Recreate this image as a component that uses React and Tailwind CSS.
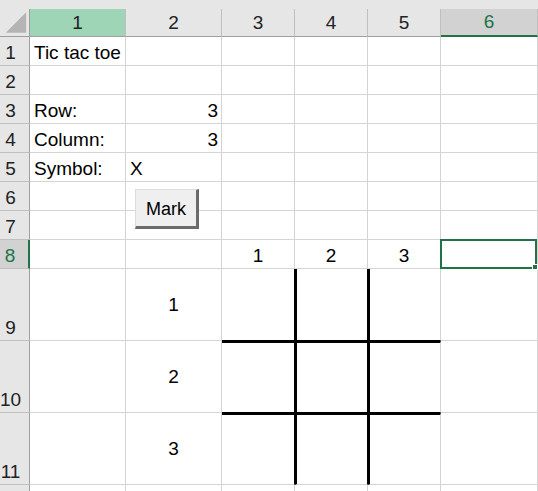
import clsx from "clsx";

const FONT = { fontFamily: '"Liberation Sans", Arial, sans-serif' };

function ColHead({ w, className, children }) {
    return (
        <div
            className={clsx(
                "shrink-0 h-full flex items-center justify-center pt-[1px] border-r border-b border-r-[#bfbfbf] border-b-[#9e9e9e] text-[19px] text-[#222]",
                w,
                className
            )}
        >
            {children}
        </div>
    );
}

function Row({ num, tall, active, children }) {
    return (
        <div className={clsx("flex shrink-0", tall ? "h-[72px]" : "h-[29px]")}>
            <div
                className={clsx(
                    "w-[30px] shrink-0 flex items-end justify-center pr-[8px] pb-[1px] border-b border-b-[#bfbfbf] text-[19px] leading-[22px]",
                    active
                        ? "bg-[#d2d2d2] text-[#217346] border-r-2 border-r-[#217346]"
                        : "bg-[#e6e6e6] text-[#222] border-r border-r-[#9e9e9e]"
                )}
            >
                {num}
            </div>
            {children}
        </div>
    );
}

function Cell({ w, className, children }) {
    return (
        <div
            className={clsx(
                "shrink-0 flex border-r border-b border-[#d4d4d4] text-[19px] leading-[22px] text-black whitespace-nowrap",
                w,
                className
            )}
        >
            {children}
        </div>
    );
}

const W1 = "w-[96px]";
const W2 = "w-[96px]";
const W3 = "w-[73px]";
const W4 = "w-[73px]";
const W5 = "w-[73px]";
const W6 = "flex-1";

const base = "items-end pl-[4px] pb-[1px]";

function EmptyRow({ num }) {
    return (
        <Row num={num}>
            <Cell w={W1} />
            <Cell w={W2} />
            <Cell w={W3} />
            <Cell w={W4} />
            <Cell w={W5} />
            <Cell w={W6} />
        </Row>
    );
}

export default function App() {
    return (
        <div className="w-[538px] h-[491px] overflow-hidden bg-white flex flex-col" style={FONT}>

            <div className="h-[9px] shrink-0 bg-[#e6e6e6]" />

            {/* column headers */}
            <div className="h-[28px] shrink-0 flex bg-[#e6e6e6]">
                <div className="w-[30px] shrink-0 h-full border-r border-b border-r-[#9e9e9e] border-b-[#9e9e9e] flex items-end justify-end">
                    <svg width="30" height="28" viewBox="0 0 30 28">
                        <polygon points="27,4 27,25 6,25" fill="#b4b4b4" />
                    </svg>
                </div>
                <ColHead w={W1} className="bg-[#9fd5b7]">1</ColHead>
                <ColHead w={W2}>2</ColHead>
                <ColHead w={W3}>3</ColHead>
                <ColHead w={W4}>4</ColHead>
                <ColHead w={W5}>5</ColHead>
                <ColHead w={W6} className="bg-[#d2d2d2] text-[#217346] border-b-2 border-b-[#217346]">6</ColHead>
            </div>

            <Row num="1">
                <Cell w={W1} className={base}>Tic tac toe</Cell>
                <Cell w={W2} />
                <Cell w={W3} />
                <Cell w={W4} />
                <Cell w={W5} />
                <Cell w={W6} />
            </Row>

            <EmptyRow num="2" />

            <Row num="3">
                <Cell w={W1} className={base}>Row:</Cell>
                <Cell w={W2} className="items-end justify-end pr-[3px] pb-[1px]">3</Cell>
                <Cell w={W3} />
                <Cell w={W4} />
                <Cell w={W5} />
                <Cell w={W6} />
            </Row>

            <Row num="4">
                <Cell w={W1} className={base}>Column:</Cell>
                <Cell w={W2} className="items-end justify-end pr-[3px] pb-[1px]">3</Cell>
                <Cell w={W3} />
                <Cell w={W4} />
                <Cell w={W5} />
                <Cell w={W6} />
            </Row>

            <Row num="5">
                <Cell w={W1} className={base}>Symbol:</Cell>
                <Cell w={W2} className={base}>X</Cell>
                <Cell w={W3} />
                <Cell w={W4} />
                <Cell w={W5} />
                <Cell w={W6} />
            </Row>

            <Row num="6">
                <Cell w={W1} />
                <Cell w={W2} className="relative">
                    <button
                        type="button"
                        className="absolute z-10 left-[9px] top-[7px] w-[64px] h-[40px] bg-[#efefef] border-t border-l border-[#dcdcdc] border-r-[3px] border-b-[3px] border-r-[#6b6b6b] border-b-[#6b6b6b] text-[18px] text-black flex items-center justify-center pt-[1px]"
                    >
                        Mark
                    </button>
                </Cell>
                <Cell w={W3} />
                <Cell w={W4} />
                <Cell w={W5} />
                <Cell w={W6} />
            </Row>

            <EmptyRow num="7" />

            <Row num="8" active>
                <Cell w={W1} />
                <Cell w={W2} />
                <Cell w={W3} className="items-end justify-center pb-[1px]">1</Cell>
                <Cell w={W4} className="items-end justify-center pb-[1px]">2</Cell>
                <Cell w={W5} className="items-end justify-center pb-[1px]">3</Cell>
                <Cell w={W6} className="relative">
                    <div className="absolute -left-[1px] -top-[1px] right-0 -bottom-[1px] border-2 border-[#217346]" />
                    <div className="absolute -right-[1px] -bottom-[2px] w-[6px] h-[6px] bg-[#217346] border border-white" />
                </Cell>
            </Row>

            <Row num="9" tall>
                <Cell w={W1} />
                <Cell w={W2} className="items-center justify-center">1</Cell>
                <Cell w={W3} className="border-r-black border-b-black" />
                <Cell w={W4} className="border-l-2 border-l-black border-r-black border-b-black" />
                <Cell w={W5} className="border-l-2 border-l-black border-b-black" />
                <Cell w={W6} />
            </Row>

            <Row num="10" tall>
                <Cell w={W1} />
                <Cell w={W2} className="items-center justify-center">2</Cell>
                <Cell w={W3} className="border-t-2 border-t-black border-r-black border-b-black" />
                <Cell w={W4} className="border-t-2 border-t-black border-l-2 border-l-black border-r-black border-b-black" />
                <Cell w={W5} className="border-t-2 border-t-black border-l-2 border-l-black border-b-black" />
                <Cell w={W6} />
            </Row>

            <Row num="11" tall>
                <Cell w={W1} />
                <Cell w={W2} className="items-center justify-center">3</Cell>
                <Cell w={W3} className="border-t-2 border-t-black border-r-black" />
                <Cell w={W4} className="border-t-2 border-t-black border-l-2 border-l-black border-r-black" />
                <Cell w={W5} className="border-t-2 border-t-black border-l-2 border-l-black" />
                <Cell w={W6} />
            </Row>

            <EmptyRow num="" />
        </div>
    );
}
